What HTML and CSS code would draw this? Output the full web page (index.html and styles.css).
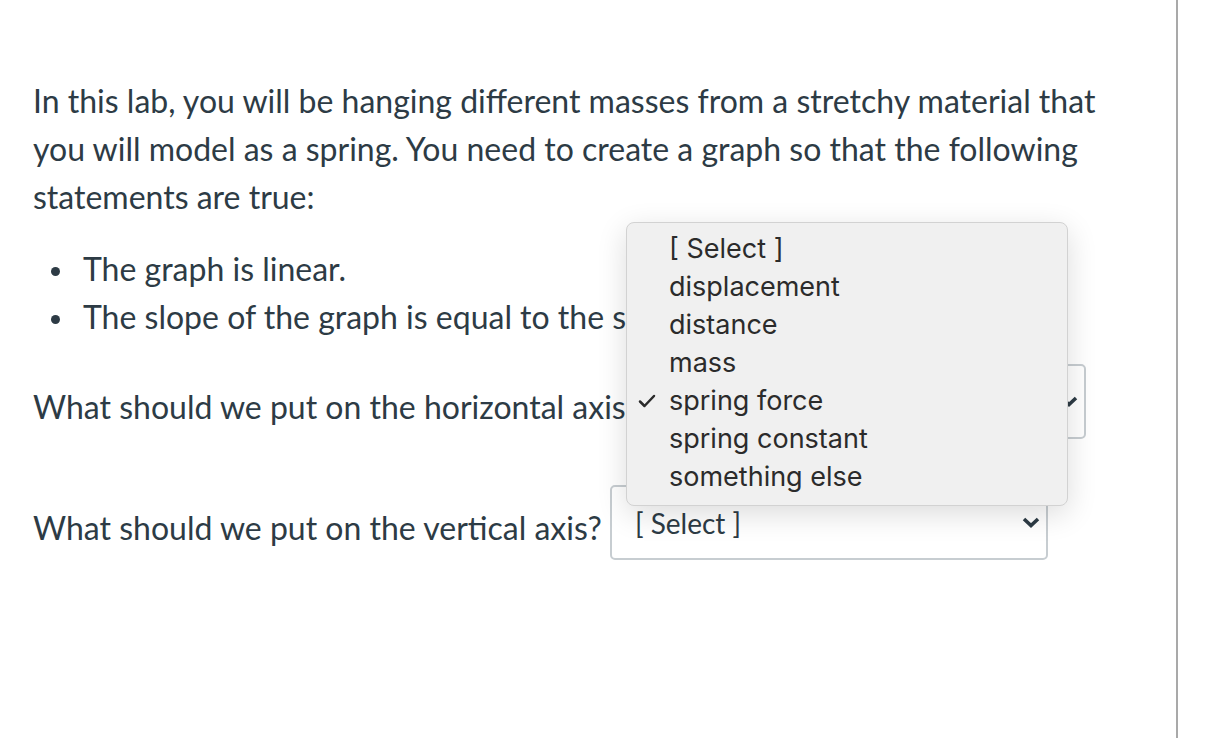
FILE: index.html
```html
<!DOCTYPE html>
<html>
<head>
<meta charset="utf-8">
<link rel="stylesheet" href="styles.css">
</head>
<body>
<div class="page">
  <div class="content">
    <p class="intro">In this lab, you will be hanging different masses from a stretchy material that you will model as a spring. You need to create a graph so that the following statements are true:</p>
    <ul class="facts">
      <li>The graph is linear.</li>
      <li>The slope of the graph is equal to the spring constant.</li>
    </ul>
    <p class="question q-horizontal">What should we put on the horizontal axis? <span class="select"><span class="select-value">spring force</span><svg class="chev" viewBox="0 0 18 11" width="18" height="11"><path d="M2 2 L9 8.5 L16 2" fill="none" stroke="#2d3b45" stroke-width="3.6" stroke-linecap="butt" stroke-linejoin="miter"/></svg></span></p>
    <p class="question q-vertical">What should we put on the vertical axis? <span class="select"><span class="select-value">[ Select ]</span><svg class="chev" viewBox="0 0 18 11" width="18" height="11"><path d="M2 2 L9 8.5 L16 2" fill="none" stroke="#2d3b45" stroke-width="3.6" stroke-linecap="butt" stroke-linejoin="miter"/></svg></span></p>

    <div class="menu">
      <div class="menu-item">[ Select ]</div>
      <div class="menu-item">displacement</div>
      <div class="menu-item">distance</div>
      <div class="menu-item">mass</div>
      <div class="menu-item checked"><svg class="check" viewBox="0 0 18 14" width="18" height="14"><path d="M2 7.5 L6.5 12 L16 2" fill="none" stroke="#2b2b2b" stroke-width="2.5" stroke-linecap="round" stroke-linejoin="round"/></svg>spring force</div>
      <div class="menu-item">spring constant</div>
      <div class="menu-item">something else</div>
    </div>
  </div>
</div>
</body>
</html>
```

FILE: styles.css
```css
html, body {
  margin: 0;
  padding: 0;
  background: #ffffff;
}

.page {
  width: 1176px;
  height: 738px;
  border-right: 2px solid #a9a9a9;
  overflow: hidden;
}

.content {
  position: relative;
  padding: 77px 0 0 33px;
  font-family: Lato, "Open Sans", sans-serif;
  font-size: 32px;
  line-height: 48px;
  color: #2d3b45;
}

.intro {
  margin: 0;
  width: 1100px;
}

.facts {
  margin: 24px 0 0;
  padding-left: 50px;
  list-style: none;
  white-space: nowrap;
}

.facts li {
  position: relative;
}

.facts li::before {
  content: "";
  position: absolute;
  left: -32px;
  top: 22px;
  width: 9px;
  height: 9px;
  border-radius: 50%;
  background: #2d3b45;
}

.question {
  margin: 23px 0 0;
  white-space: nowrap;
}

.q-vertical {
  margin-top: 46px;
}

.select {
  display: inline-flex;
  align-items: center;
  justify-content: space-between;
  box-sizing: border-box;
  width: 438px;
  height: 75px;
  margin-left: 0;
  padding: 0 6px 0 23px;
  border: 2px solid #c7cdd1;
  border-radius: 5px;
  background: #ffffff;
  vertical-align: 6px;
}

.select-value {
  font-size: 28px;
  line-height: 1;
}

.chev {
  flex: none;
}

.menu {
  position: absolute;
  left: 626px;
  top: 222px;
  width: 442px;
  box-sizing: border-box;
  padding: 7px 0 9px;
  background: #f0f0f0;
  border: 1px solid #d2d2d2;
  border-radius: 8px;
  box-shadow: 0 8px 30px rgba(0, 0, 0, 0.14);
  font-family: Inter, "Noto Sans", sans-serif;
  font-size: 27px;
  line-height: 38px;
  color: #2b2b2b;
}

.menu-item {
  position: relative;
  padding-left: 42px;
}

.check {
  position: absolute;
  left: 11px;
  top: 12px;
}
```
